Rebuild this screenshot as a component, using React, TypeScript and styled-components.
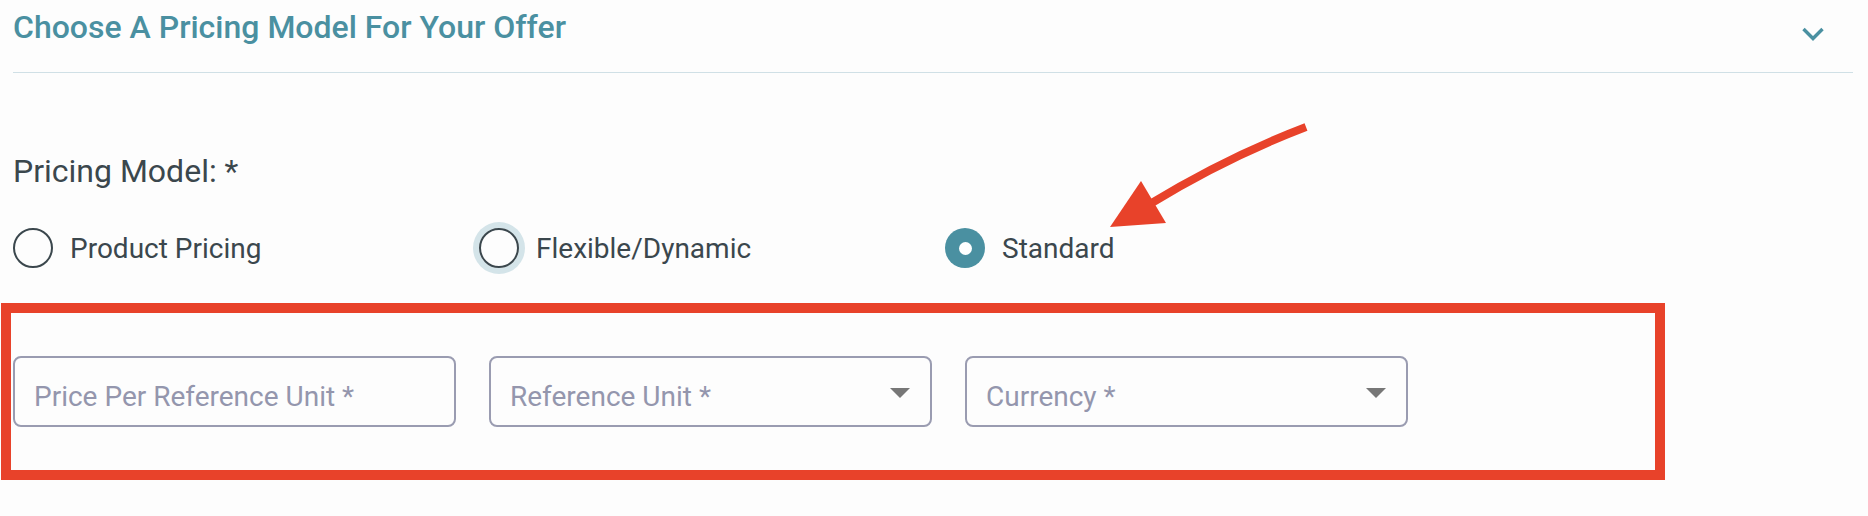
import React from "react";
import styled, { createGlobalStyle } from "styled-components";

const GlobalStyle = createGlobalStyle`
  html, body {
    margin: 0;
    padding: 0;
    background: #fdfdfd;
  }
  body {
    font-family: Roboto, "Liberation Sans", Arial, sans-serif;
  }
  *, *::before, *::after { box-sizing: border-box; }
`;

const TEAL = "#4a90a1";
const RED = "#e8422a";

const Page = styled.div`
  position: relative;
  width: 1868px;
  height: 516px;
  padding: 0 15px 0 13px;
  overflow: hidden;
`;

const Header = styled.div`
  display: flex;
  justify-content: space-between;
  align-items: flex-start;
  padding-top: 8px;
  padding-bottom: 26px;
  border-bottom: 1.5px solid #d0e0e6;
`;

const Title = styled.h2`
  margin: 0;
  font-size: 32px;
  line-height: 38px;
  font-weight: 500;
  color: ${TEAL};
`;

const Chevron = styled.svg`
  display: block;
  margin-top: 19px;
  margin-right: 29px;
`;

const Section = styled.div`
  padding-top: 79px;
`;

const GroupLabel = styled.div`
  font-size: 32px;
  line-height: 38px;
  color: #3b474d;
`;

const RadioRow = styled.div`
  display: grid;
  grid-template-columns: repeat(3, 466px);
  margin-top: 38px;
`;

const RadioOption = styled.label`
  display: flex;
  align-items: center;
  gap: 17px;
  font-size: 28px;
  line-height: 33px;
  color: #3b474d;
`;

const RadioCircle = styled.span<{ $checked?: boolean; $focused?: boolean }>`
  flex: none;
  width: 40px;
  height: 40px;
  border-radius: 50%;
  display: flex;
  align-items: center;
  justify-content: center;
  border: ${(p) => (p.$checked ? `none` : `2px solid #3b474d`)};
  background: ${(p) => (p.$checked ? TEAL : "transparent")};
  box-shadow: ${(p) => (p.$focused ? "0 0 0 6px #d4e4e9" : "none")};
  &::after {
    content: "";
    display: ${(p) => (p.$checked ? "block" : "none")};
    width: 13px;
    height: 13px;
    border-radius: 50%;
    background: #fff;
  }
`;

const FieldsFrame = styled.div`
  position: relative;
  margin-top: 45px;
  padding: 43px 0;
  &::before {
    content: "";
    position: absolute;
    left: -12px;
    top: -10px;
    bottom: -10px;
    width: 1664px;
    border: 10px solid ${RED};
    pointer-events: none;
  }
`;

const FieldsRow = styled.div`
  display: grid;
  grid-template-columns: repeat(3, 443px);
  column-gap: 33px;
`;

const Field = styled.div`
  height: 71px;
  display: flex;
  align-items: center;
  justify-content: space-between;
  padding: 10px 20px 0 19px;
  border: 2px solid #9a9cb1;
  border-radius: 8px;
  background: #fdfdfd;
`;

const Placeholder = styled.span`
  font-size: 28px;
  line-height: 33px;
  color: #9496ad;
`;

const Caret = styled.span`
  width: 0;
  height: 0;
  border-left: 10px solid transparent;
  border-right: 10px solid transparent;
  border-top: 10px solid #777777;
  margin-top: -8px;
`;

const Annotation = styled.svg`
  position: absolute;
  left: 1090px;
  top: 110px;
  pointer-events: none;
`;

const radios = [
  { label: "Product Pricing" },
  { label: "Flexible/Dynamic", focused: true },
  { label: "Standard", checked: true },
];

const fields = [
  { text: "Price Per Reference Unit *", select: false },
  { text: "Reference Unit *", select: true },
  { text: "Currency *", select: true },
];

export default function App() {
  return (
    <>
      <GlobalStyle />
      <Page>
        <Header>
          <Title>Choose A Pricing Model For Your Offer</Title>
          <Chevron width="22" height="14" viewBox="0 0 22 14">
            <polyline
              points="1.5,2 11,11.5 20.5,2"
              fill="none"
              stroke={TEAL}
              strokeWidth="3.4"
            />
          </Chevron>
        </Header>
        <Section>
          <GroupLabel>Pricing Model: *</GroupLabel>
          <RadioRow>
            {radios.map((r) => (
              <RadioOption key={r.label}>
                <RadioCircle $checked={r.checked} $focused={r.focused} />
                {r.label}
              </RadioOption>
            ))}
          </RadioRow>
          <FieldsFrame>
            <FieldsRow>
              {fields.map((f) => (
                <Field key={f.text}>
                  <Placeholder>{f.text}</Placeholder>
                  {f.select && <Caret />}
                </Field>
              ))}
            </FieldsRow>
          </FieldsFrame>
        </Section>
        <Annotation width="240" height="130" viewBox="1090 110 240 130">
          <path
            d="M1306,127 Q1225,158 1150,204"
            fill="none"
            stroke={RED}
            strokeWidth="8"
          />
          <polygon points="1141,181 1110,227 1166,223" fill={RED} />
        </Annotation>
      </Page>
    </>
  );
}
